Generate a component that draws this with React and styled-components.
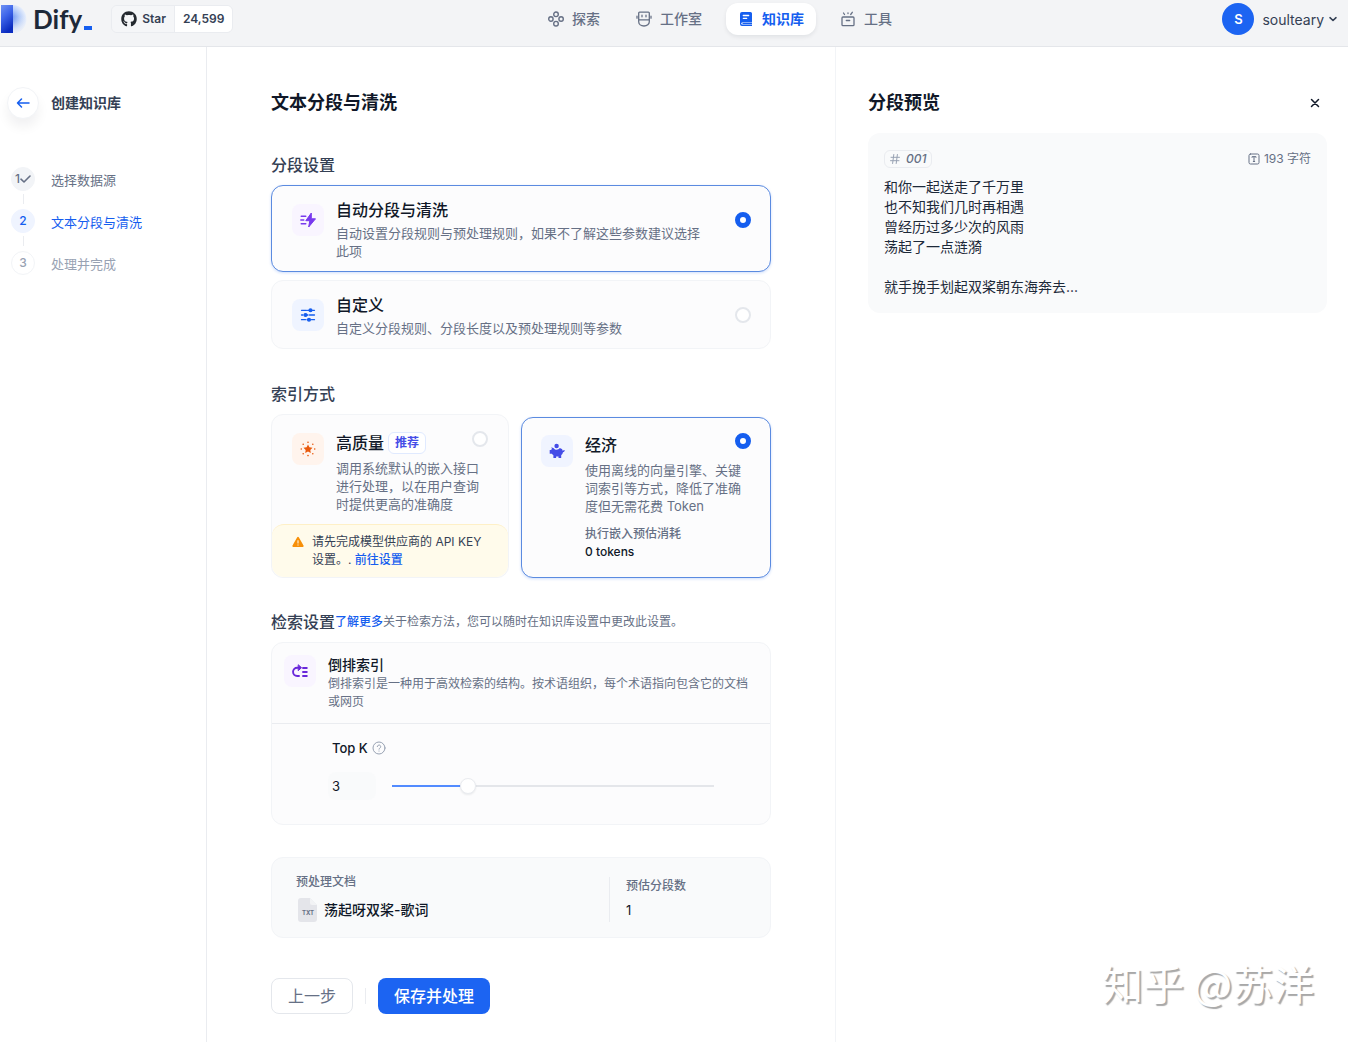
import React, { useState } from 'react';
import styled, { createGlobalStyle, css } from 'styled-components';
import { FaGithub } from 'react-icons/fa';

const colors = {
    blue: '#155eef',
    ink: '#101828',
    heading: '#344054',
    text: '#667085',
    muted: '#98a2b3',
    line: '#eaecf0',
    soft: '#f2f4f7',
    card: '#fcfcfd',
    panel: '#f9fafb',
};

const GlobalStyle = createGlobalStyle`
    *, *::before, *::after {
        box-sizing: border-box;
    }

    body {
        margin: 0;
        background-color: #fff;
        color: ${colors.ink};
        font-family: Inter, 'Noto Sans CJK SC', sans-serif;
        font-size: 14px;
        line-height: 20px;
    }

    h1, h2, h3, p {
        margin: 0;
    }

    button, input {
        font-family: inherit;
    }

    svg {
        display: block;
        flex-shrink: 0;
    }
`;

const Page = styled.div`
    min-height: 100vh;
    display: flex;
    flex-direction: column;
`;

/* Header */

const Header = styled.header`
    display: flex;
    justify-content: space-between;
    align-items: center;
    height: 47px;
    padding: 0 10px 8px 0;
    background-color: #f3f4f6;
    border-bottom: 1px solid #e4e6ea;
`;

const HeaderLeft = styled.div`
    display: flex;
    align-items: center;
    gap: 19px;
`;

const Logo = styled.a`
    display: flex;
    align-items: center;
    gap: 6px;
    color: #1d2939;
    font-family: Lato, sans-serif;
    font-size: 26px;
    font-weight: 700;
    line-height: 32px;
    text-decoration: none;
`;

const LogoText = styled.span`
    display: flex;
    align-items: flex-end;
    gap: 2px;
`;

const LogoCursor = styled.span`
    width: 8px;
    height: 4px;
    margin-bottom: 5px;
    background-color: ${colors.blue};
`;

const GithubBadge = styled.a`
    display: flex;
    height: 28px;
    border: 1px solid ${colors.line};
    border-radius: 6px;
    overflow: hidden;
    color: ${colors.heading};
    font-size: 12px;
    font-weight: 600;
    line-height: 26px;
    text-decoration: none;
`;

const BadgeLabel = styled.span`
    display: flex;
    align-items: center;
    gap: 5px;
    padding: 0 8px 0 9px;
    border-right: 1px solid ${colors.line};
    background-color: #f5f6f8;
`;

const BadgeCount = styled.span`
    padding: 0 8px;
    background-color: #fff;
`;

const Nav = styled.nav`
    display: flex;
    gap: 12px;
`;

const NavItem = styled.a`
    display: flex;
    align-items: center;
    gap: 8px;
    height: 32px;
    padding: 0 12px;
    border-radius: 12px;
    color: ${colors.text};
    font-weight: 500;
    text-decoration: none;

    ${props => props.$active && css`
        background-color: #fff;
        color: ${colors.blue};
        font-weight: 700;
        box-shadow: 0 2px 4px rgba(16, 24, 40, 0.08);
    `}
`;

const UserMenu = styled.button`
    display: flex;
    align-items: center;
    gap: 8px;
    padding: 0 0 0 16px;
    border: none;
    background: none;
    color: ${colors.heading};
    font-size: 14px;
`;

const Avatar = styled.span`
    width: 32px;
    height: 32px;
    border-radius: 50%;
    background-color: #1c64f2;
    color: #fff;
    font-size: 13px;
    font-weight: 600;
    line-height: 32px;
    text-align: center;
`;

const UserName = styled.span`
    display: flex;
    align-items: center;
    gap: 4px;
`;

/* Columns */

const Columns = styled.div`
    flex: 1;
    display: grid;
    grid-template-columns: 207px minmax(0, 628fr) minmax(0, 513fr);
`;

const Sidebar = styled.aside`
    padding: 40px 7px;
    border-right: 1px solid ${colors.line};
`;

const SidebarTop = styled.div`
    display: flex;
    align-items: center;
    gap: 12px;
    margin-bottom: 47px;
`;

const BackButton = styled.button`
    display: flex;
    justify-content: center;
    align-items: center;
    width: 32px;
    height: 32px;
    padding: 0;
    border: 1px solid ${colors.soft};
    border-radius: 50%;
    background-color: #fff;
    color: ${colors.blue};
    box-shadow: 0 8px 12px rgba(16, 24, 40, 0.06);
`;

const SidebarTitle = styled.h1`
    color: ${colors.heading};
    font-size: 14px;
    font-weight: 600;
`;

const Steps = styled.ol`
    margin: 0;
    padding: 0 0 0 4px;
    list-style: none;
`;

const Step = styled.li`
    display: grid;
    grid-template-columns: 24px 1fr;
    column-gap: 16px;
    color: ${props => props.$color};
    font-size: 13px;
    line-height: 28px;
`;

const StepNumber = styled.span`
    display: flex;
    justify-content: center;
    align-items: center;
    height: 24px;
    margin-top: 1px;
    border: 1px solid ${props => props.$border || props.$fill};
    border-radius: 50%;
    background-color: ${props => props.$fill};
    font-size: 12px;
    font-weight: 500;
`;

const StepLine = styled.span`
    width: 1px;
    height: 10px;
    margin: 0 auto 4px;
    background-color: ${colors.line};
`;

const Main = styled.main`
    padding: 44px 64px 27px;
`;

const PageTitle = styled.h2`
    font-size: 18px;
    font-weight: 600;
    line-height: 24px;
`;

const SectionTitle = styled.h3`
    color: ${colors.heading};
    font-size: 16px;
    font-weight: 500;
    line-height: 24px;
`;

const Section = styled.section`
    margin-top: ${props => props.$top}px;
`;

const SectionHead = styled.div`
    display: flex;
    align-items: center;
    margin-bottom: 8px;
    color: ${colors.text};
    font-size: 12px;
`;

const TextLink = styled.a`
    color: ${colors.blue};
    font-weight: 500;
    text-decoration: none;
`;

const Stack = styled.div`
    display: flex;
    flex-direction: column;
    gap: 8px;
`;

const IndexGrid = styled.div`
    display: grid;
    grid-template-columns: 238fr 250fr;
    align-items: end;
    gap: 12px;
`;

const cardFrame = css`
    border: 1px solid ${props => (props.$active ? '#5b8be0' : colors.soft)};
    border-radius: 12px;
    background-color: ${colors.card};
    box-shadow: ${props => (props.$active ? '0 1px 3px rgba(21, 94, 239, 0.2)' : 'none')};
`;

const OptionCard = styled.label`
    ${cardFrame}
    display: flex;
    align-items: flex-start;
    gap: 12px;
    padding: 12px 19px 11px 20px;
`;

const IndexCard = styled.div`
    ${cardFrame}
    overflow: hidden;
`;

const IndexBody = styled.label`
    display: flex;
    align-items: flex-start;
    gap: 12px;
    padding: ${props => props.$padding};
`;

const IconBox = styled.span`
    display: flex;
    justify-content: center;
    align-items: center;
    flex-shrink: 0;
    width: 32px;
    height: 32px;
    margin-top: ${props => props.$top || 0}px;
    border-radius: 8px;
    background-color: ${props => props.$fill};
`;

const OptionText = styled.span`
    flex: 1;
    min-width: 0;
    display: flex;
    flex-direction: column;
    gap: ${props => props.$gap || 2}px;
`;

const OptionTitle = styled.span`
    display: flex;
    align-items: center;
    gap: 4px;
    color: ${colors.ink};
    font-size: 16px;
    font-weight: 500;
    line-height: 24px;
`;

const OptionDescription = styled.span`
    color: ${colors.text};
    font-size: 13px;
    line-height: 18px;
`;

const Radio = styled.input.attrs({ type: 'radio' })`
    appearance: none;
    flex-shrink: 0;
    width: 16px;
    height: 16px;
    margin: 0;
    border: 2px solid #e4e7ec;
    border-radius: 50%;
    background-color: #fff;

    &:checked {
        border: 5px solid ${colors.blue};
    }
`;

const SideRadio = styled(Radio)`
    margin: 14px 0 0 12px;
`;

const TitleRadio = styled(Radio)`
    align-self: flex-start;
    margin-left: auto;
`;

const Recommend = styled.span`
    height: 22px;
    padding: 0 6px;
    border: 1px solid #e0eaff;
    border-radius: 6px;
    background-color: #fff;
    color: #444ce7;
    font-size: 12px;
    font-weight: 600;
    line-height: 20px;
`;

const Warning = styled.div`
    display: flex;
    align-items: flex-start;
    gap: 8px;
    padding: 8px 20px;
    border-top: 1px solid #fef0c7;
    border-radius: 12px;
    background-color: #fffbeb;
    color: ${colors.heading};
    font-size: 12px;
    line-height: 18px;

    svg {
        margin-top: 3px;
    }
`;

const Estimate = styled.span`
    display: flex;
    flex-direction: column;
    margin-top: 6px;
    color: ${colors.text};
    font-size: 12px;
    font-weight: 500;
    line-height: 18px;

    strong {
        color: ${colors.ink};
        font-weight: 500;
    }
`;

const RetrievalCard = styled.div`
    ${cardFrame}
`;

const RetrievalHead = styled.div`
    display: flex;
    gap: 12px;
    padding: 12px;
    border-bottom: 1px solid ${colors.line};
`;

const RetrievalTitle = styled.h3`
    font-size: 14px;
    font-weight: 500;
    line-height: 20px;
`;

const RetrievalText = styled.p`
    color: ${colors.text};
    font-size: 12px;
    line-height: 18px;
`;

const RetrievalBody = styled.div`
    padding: 14px 56px 24px;
`;

const TopKLabel = styled.label`
    display: flex;
    align-items: center;
    gap: 4px;
    padding-left: 4px;
    font-size: 13px;
    font-weight: 500;
    line-height: 20px;
`;

const TopKRow = styled.div`
    display: flex;
    align-items: center;
    gap: 16px;
    margin-top: 14px;
`;

const TopKInput = styled.input`
    appearance: textfield;
    width: 48px;
    height: 28px;
    padding: 0 4px;
    border: none;
    border-radius: 8px;
    background-color: ${colors.panel};
    color: ${colors.ink};
    font-size: 13px;

    &::-webkit-inner-spin-button {
        appearance: none;
    }
`;

const Slider = styled.input.attrs({ type: 'range' })`
    appearance: none;
    flex: 1;
    min-width: 0;
    height: 16px;
    margin: 0;
    background: linear-gradient(to right, #528bff var(--fill), #e4e6ea var(--fill)) center / 100% 2px no-repeat;

    &::-webkit-slider-thumb {
        appearance: none;
        width: 16px;
        height: 16px;
        border: 1px solid ${colors.line};
        border-radius: 50%;
        background-color: #fff;
        box-shadow: 0 1px 2px rgba(16, 24, 40, 0.08);
    }
`;

const Summary = styled.section`
    display: flex;
    margin-top: 32px;
    padding: 15px 24px;
    border: 1px solid ${colors.soft};
    border-radius: 12px;
    background-color: ${colors.panel};
`;

const SummaryDocument = styled.div`
    flex: 1;
`;

const SummarySegments = styled.div`
    display: flex;
    flex-direction: column;
    gap: 5px;
    width: 137px;
    margin-top: 4px;
    padding: 0 16px;
    border-left: 1px solid ${colors.line};
    font-size: 13px;
`;

const SummaryLabel = styled.p`
    color: ${colors.text};
    font-size: 12px;
    font-weight: 500;
    line-height: 18px;
`;

const FileName = styled.p`
    display: flex;
    align-items: center;
    gap: 4px;
    margin-top: 7px;
    font-weight: 500;
    line-height: 24px;
`;

const Actions = styled.div`
    display: flex;
    align-items: center;
    gap: 12px;
    margin-top: 40px;
`;

const Button = styled.button`
    height: 36px;
    padding: 0 16px;
    border: 1px solid #e4e7ec;
    border-radius: 8px;
    background-color: #fff;
    color: ${colors.text};
    font-size: 16px;
    line-height: 24px;

    ${props => props.$primary && css`
        border: none;
        background-color: #1c64f2;
        color: #fff;
        font-weight: 500;
    `}
`;

const ActionsDivider = styled.span`
    width: 1px;
    height: 16px;
    background-color: ${colors.line};
`;

/* Preview */

const Preview = styled.aside`
    padding: 44px 21px 32px 32px;
    border-left: 1px solid ${colors.soft};
`;

const PreviewHead = styled.div`
    display: flex;
    justify-content: space-between;
    align-items: center;
    margin-bottom: 18px;
`;

const CloseButton = styled.button`
    display: flex;
    padding: 4px;
    border: none;
    background: none;
    color: ${colors.ink};
`;

const SegmentCard = styled.article`
    padding: 16px;
    border-radius: 12px;
    background-color: ${colors.panel};
`;

const SegmentHead = styled.div`
    display: flex;
    justify-content: space-between;
    align-items: center;
    margin-bottom: 8px;
    color: ${colors.text};
    font-size: 12px;
`;

const SegmentId = styled.span`
    display: flex;
    align-items: center;
    gap: 6px;
    height: 18px;
    padding: 0 5px;
    border: 1px solid ${colors.line};
    border-radius: 6px;
    font-style: italic;
    font-weight: 500;
`;

const SegmentCount = styled.span`
    display: flex;
    align-items: center;
    gap: 4px;
`;

const SegmentText = styled.p`
    color: #1d2939;
    white-space: pre-line;
`;

const Watermark = styled.div`
    position: absolute;
    right: 34px;
    bottom: 32px;
    color: #fff;
    font-family: 'Noto Sans CJK SC', sans-serif;
    font-size: 41px;
    line-height: 56px;
    text-shadow: 2px 2px 1px #a8a8a8;
    pointer-events: none;
`;

/* Icons */

const LogoMark = () => (
    <svg width="27" height="28" viewBox="0 0 27 28">
        <defs>
            <linearGradient id="stem" x1="0" y1="0" x2="0.4" y2="1">
                <stop offset="0" stopColor="#6f92f3" />
                <stop offset="0.45" stopColor="#3f66ea" />
                <stop offset="1" stopColor="#0b2cc0" />
            </linearGradient>
            <radialGradient id="bowl" gradientUnits="userSpaceOnUse" cx="9" cy="15" r="18">
                <stop offset="0.2" stopColor="#6f97f3" />
                <stop offset="0.6" stopColor="#b3cbf9" />
                <stop offset="1" stopColor="#edf2fc" />
            </radialGradient>
            <linearGradient id="fade" x1="0" y1="0" x2="0" y2="1">
                <stop offset="0.4" stopColor="#f3f4f6" stopOpacity="0" />
                <stop offset="1" stopColor="#f3f4f6" stopOpacity="0.8" />
            </linearGradient>
        </defs>
        <path d="M12 0h1a13.500 14 0 0 1 0 28h-1z" fill="url(#bowl)" />
        <path d="M12 0h1a13.500 14 0 0 1 0 28h-1z" fill="url(#fade)" />
        <path d="M1 0h12v28H1z" fill="url(#stem)" />
    </svg>
);

const ExploreIcon = () => (
    <svg width="16" height="16" viewBox="0 0 16 16" fill="none" stroke="currentColor" strokeWidth="1.4">
        <circle cx="8" cy="3.3" r="2.3" />
        <circle cx="8" cy="12.7" r="2.3" />
        <circle cx="2.9" cy="8" r="2.2" />
        <circle cx="13.1" cy="8" r="2.2" />
    </svg>
);

const StudioIcon = () => (
    <svg width="16" height="16" viewBox="0 0 16 16" fill="none" stroke="currentColor" strokeWidth="1.3" strokeLinecap="round" strokeLinejoin="round">
        <path d="M3.600 1.200h8.800a.9.9 0 0 1 .9.9v6.700H2.700V2.100a.9.900 0 0 1 .9-.9z" />
        <path d="M2.700 8.800v2c0 2.300 2.200 4.200 5.300 4.200s5.300-1.900 5.300-4.200v-2M1 5.200v2M15 5.200v2M6 4.200v1.600M10 4.200v1.600" />
    </svg>
);

const BookIcon = () => (
    <svg width="16" height="16" viewBox="0 0 16 16">
        <path d="M4 1h8.500A1.500 1.500 0 0 1 14 2.500v9H4.200a1 1 0 0 0 0 2H14V15H4a2 2 0 0 1-2-2V3a2 2 0 0 1 2-2z" fill="currentColor" />
        <path d="M5.300 4.500h5.400M5.300 7.300h3.400" stroke="#fff" strokeWidth="1.300" strokeLinecap="round" />
        <path d="M4.500 12.500H14" stroke="currentColor" strokeWidth="1" />
    </svg>
);

const ToolsIcon = () => (
    <svg width="16" height="16" viewBox="0 0 16 16" fill="none" stroke="currentColor" strokeWidth="1.3" strokeLinecap="round" strokeLinejoin="round">
        <rect x="2" y="6" width="12" height="8.700" rx="1" />
        <path d="M6.300 9.500h3.400M3.500 2l1 1.500M8 1.800v.8M12.300 1.300l-1.600 2.200" />
    </svg>
);

const ChevronIcon = () => (
    <svg width="10" height="10" viewBox="0 0 10 10" fill="none" stroke="currentColor" strokeWidth="1.6" strokeLinecap="round" strokeLinejoin="round">
        <path d="M2 3.700l3 2.800 3-2.800" />
    </svg>
);

const ArrowLeftIcon = () => (
    <svg width="14" height="12" viewBox="0 0 14 12" fill="none" stroke="currentColor" strokeWidth="1.5" strokeLinecap="round" strokeLinejoin="round">
        <path d="M13 6H1.500M5.500 2l-4 4 4 4" />
    </svg>
);

const CheckIcon = () => (
    <svg width="11" height="10" viewBox="0 0 11 10" fill="none" stroke="currentColor" strokeWidth="1.6" strokeLinecap="round" strokeLinejoin="round">
        <path d="M1 5.200l3 2.800L10 2" />
    </svg>
);

const CloseIcon = () => (
    <svg width="16" height="16" viewBox="0 0 16 16" stroke="currentColor" strokeWidth="1.5" strokeLinecap="round">
        <path d="M4.500 4.500l7 7M11.500 4.500l-7 7" />
    </svg>
);

const BoltIcon = () => (
    <svg width="16" height="16" viewBox="0 0 16 16">
        <path d="M11.300 1L5.800 8.700h4L8.700 15l6.800-8.200h-4.200z" fill="#7839ee" stroke="#7839ee" strokeLinejoin="round" />
        <path d="M1.200 4.200h4.600M.8 8h3M1.200 11.800h4.600" stroke="#7839ee" strokeWidth="1.400" strokeLinecap="round" />
    </svg>
);

const SlidersIcon = () => (
    <svg width="16" height="16" viewBox="0 0 16 16" stroke="#155eef" fill="#155eef" strokeWidth="1.300" strokeLinecap="round">
        <path d="M1.500 3.300h5M12.500 3.300h2M1.500 8h1.500M9.500 8h5M1.500 12.700h4M11.500 12.700h3" />
        <path d="M7.500 3.300h2M6 8h2M7 12.700h1" />
        <circle cx="10.500" cy="3.300" r="1.400" />
        <circle cx="5.500" cy="8" r="1.400" />
        <circle cx="9" cy="12.700" r="1.400" />
    </svg>
);

const StarIcon = () => (
    <svg width="16" height="16" viewBox="0 0 16 16" fill="#e9590c">
        <path d="M8 3.400l1.400 2.800 3.100.5-2.200 2.200.5 3.100L8 10.600 5.200 12l.5-3.100-2.200-2.200 3.100-.5z" />
        <circle cx="8" cy="1.300" r=".8" />
        <circle cx="3.200" cy="3.300" r=".8" />
        <circle cx="12.800" cy="3.300" r=".8" />
        <circle cx="1.300" cy="8" r=".8" />
        <circle cx="14.700" cy="8" r=".8" />
        <circle cx="3.200" cy="12.800" r=".8" />
        <circle cx="12.800" cy="12.800" r=".8" />
        <circle cx="8" cy="14.600" r=".8" />
    </svg>
);

const PiggyIcon = () => (
    <svg width="16" height="16" viewBox="0 0 16 16" fill="#444ce7">
        <circle cx="7.600" cy="3" r="2.200" />
        <path d="M2.300 4.300l2.500.9c.7 1 1.700 1.500 2.800 1.500 1.300 0 2.500-.7 3.100-1.700 1.800.4 2.800 1.400 3.100 2.900.5 0 .7-.3.700-.9h1.100c.1 1.300-.4 2.100-1.600 2.300-.2 1.200-.9 2.200-1.800 2.900v2.900H9.500v-1.500H7.100v1.500H4.400v-2.900c-.7-.4-1.200-.9-1.500-1.500H.7V6.900h1.500c.2-.5.400-.9.700-1.200z" />
    </svg>
);

const WarningIcon = () => (
    <svg width="12" height="12" viewBox="0 0 12 12">
        <path d="M5.200 1.200a.9.900 0 0 1 1.600 0l4.700 8.400a.9.900 0 0 1-.8 1.400H1.300a.9.900 0 0 1-.8-1.400z" fill="#f79009" />
        <path d="M6 4.700v2.400M6 8.900v.2" stroke="#fff" strokeWidth="1" strokeLinecap="round" />
    </svg>
);

const InvertedIcon = () => (
    <svg width="16" height="16" viewBox="0 0 16 16" fill="none" stroke="#6927da" strokeWidth="1.900" strokeLinecap="round">
        <path d="M7 4.700H5.200a4 4 0 0 0 0 8.300H7M11 5h3.800M11 9h3.800M11 13h3.800" />
        <path d="M6.500 2l3 2.700-3 2.700z" fill="#6927da" strokeWidth="1" strokeLinejoin="round" />
    </svg>
);

const HelpIcon = () => (
    <svg width="14" height="14" viewBox="0 0 14 14" fill="none" stroke="#98a2b3" strokeLinecap="round">
        <circle cx="7" cy="7" r="6" />
        <path d="M5.300 5.600a1.700 1.700 0 1 1 2.600 1.500c-.6.300-.9.600-.9 1.100M7 10v.1" />
    </svg>
);

const FileIcon = () => (
    <svg width="24" height="24" viewBox="0 0 24 24">
        <path d="M5 0h9l7 7v14a3 3 0 0 1-3 3H5a3 3 0 0 1-3-3V3a3 3 0 0 1 3-3z" fill="#e4e5ea" />
        <path d="M14 0l7 7h-5a2 2 0 0 1-2-2z" fill="#f2f3f5" />
        <text x="12" y="17" textAnchor="middle" fontSize="6" fontWeight="700" fill="#667085">TXT</text>
    </svg>
);

const HashIcon = () => (
    <svg width="10" height="10" viewBox="0 0 10 10" stroke="#98a2b3" strokeLinecap="round">
        <path d="M1 3.300h8.500M.5 6.700H9M3.800.5L2.600 9.500M7.400.5L6.200 9.500" />
    </svg>
);

const TypeSquareIcon = () => (
    <svg width="12" height="12" viewBox="0 0 12 12" fill="none" stroke="currentColor" strokeLinecap="round">
        <rect x="1" y="1" width="10" height="10" rx="1.500" />
        <path d="M4 4.300v-.6h4v.6M6 3.700v4.800M5.300 8.500h1.400" />
    </svg>
);

const navItems = [
    { label: '探索', Icon: ExploreIcon },
    { label: '工作室', Icon: StudioIcon },
    { label: '知识库', Icon: BookIcon, active: true },
    { label: '工具', Icon: ToolsIcon },
];

const segment = `和你一起送走了千万里
也不知我们几时再相遇
曾经历过多少次的风雨
荡起了一点涟漪

就手挽手划起双桨朝东海奔去...`;

const App = () => {
    const [mode, setMode] = useState('auto');
    const [index, setIndex] = useState('economy');
    const [topK, setTopK] = useState(3);

    const handleTopKChange = e => setTopK(Number(e.target.value));

    return (
        <Page>
            <GlobalStyle />
            <Header>
                <HeaderLeft>
                    <Logo href="#">
                        <LogoMark />
                        <LogoText>Dify<LogoCursor /></LogoText>
                    </Logo>
                    <GithubBadge href="#">
                        <BadgeLabel><FaGithub size={16} color="#24292f" />Star</BadgeLabel>
                        <BadgeCount>24,599</BadgeCount>
                    </GithubBadge>
                </HeaderLeft>
                <Nav>
                    {navItems.map(({ label, Icon, active }) => (
                        <NavItem key={label} href="#" $active={active}>
                            <Icon />
                            {label}
                        </NavItem>
                    ))}
                </Nav>
                <UserMenu type="button">
                    <Avatar>S</Avatar>
                    <UserName>soulteary<ChevronIcon /></UserName>
                </UserMenu>
            </Header>
            <Columns>
                <Sidebar>
                    <SidebarTop>
                        <BackButton type="button" aria-label="返回"><ArrowLeftIcon /></BackButton>
                        <SidebarTitle>创建知识库</SidebarTitle>
                    </SidebarTop>
                    <Steps>
                        <Step $color={colors.text}>
                            <StepNumber $fill="#f2f4f7">1<CheckIcon /></StepNumber>
                            选择数据源
                            <StepLine />
                        </Step>
                        <Step $color={colors.blue}>
                            <StepNumber $fill="#eff4ff">2</StepNumber>
                            文本分段与清洗
                            <StepLine />
                        </Step>
                        <Step $color={colors.muted}>
                            <StepNumber $fill="#fff" $border={colors.soft}>3</StepNumber>
                            处理并完成
                        </Step>
                    </Steps>
                </Sidebar>
                <Main>
                    <PageTitle>文本分段与清洗</PageTitle>

                    <Section $top={38}>
                        <SectionHead><SectionTitle>分段设置</SectionTitle></SectionHead>
                        <Stack>
                            <OptionCard $active={mode === 'auto'}>
                                <IconBox $fill="#f9f5ff" $top={6}><BoltIcon /></IconBox>
                                <OptionText>
                                    <OptionTitle>自动分段与清洗</OptionTitle>
                                    <OptionDescription>自动设置分段规则与预处理规则，如果不了解这些参数建议选择此项</OptionDescription>
                                </OptionText>
                                <SideRadio name="mode" checked={mode === 'auto'} onChange={() => setMode('auto')} />
                            </OptionCard>
                            <OptionCard $active={mode === 'custom'}>
                                <IconBox $fill="#eff4ff" $top={6}><SlidersIcon /></IconBox>
                                <OptionText>
                                    <OptionTitle>自定义</OptionTitle>
                                    <OptionDescription>自定义分段规则、分段长度以及预处理规则等参数</OptionDescription>
                                </OptionText>
                                <SideRadio name="mode" checked={mode === 'custom'} onChange={() => setMode('custom')} />
                            </OptionCard>
                        </Stack>
                    </Section>

                    <Section $top={33}>
                        <SectionHead><SectionTitle>索引方式</SectionTitle></SectionHead>
                        <IndexGrid>
                            <IndexCard $active={index === 'quality'}>
                                <IndexBody $padding="16px 20px 11px">
                                    <IconBox $fill="#fff4ed" $top={2}><StarIcon /></IconBox>
                                    <OptionText $gap={4}>
                                        <OptionTitle>
                                            高质量<Recommend>推荐</Recommend>
                                            <TitleRadio name="index" checked={index === 'quality'} onChange={() => setIndex('quality')} />
                                        </OptionTitle>
                                        <OptionDescription>调用系统默认的嵌入接口进行处理，以在用户查询时提供更高的准确度</OptionDescription>
                                    </OptionText>
                                </IndexBody>
                                <Warning>
                                    <WarningIcon />
                                    <span>请先完成模型供应商的 API KEY 设置。. <TextLink href="#">前往设置</TextLink></span>
                                </Warning>
                            </IndexCard>
                            <IndexCard $active={index === 'economy'}>
                                <IndexBody $padding="15px 19px 16px">
                                    <IconBox $fill="#f0f4ff" $top={2}><PiggyIcon /></IconBox>
                                    <OptionText $gap={4}>
                                        <OptionTitle>
                                            经济
                                            <TitleRadio name="index" checked={index === 'economy'} onChange={() => setIndex('economy')} />
                                        </OptionTitle>
                                        <OptionDescription>使用离线的向量引擎、关键词索引等方式，降低了准确度但无需花费 Token</OptionDescription>
                                        <Estimate>执行嵌入预估消耗<strong>0 tokens</strong></Estimate>
                                    </OptionText>
                                </IndexBody>
                            </IndexCard>
                        </IndexGrid>
                    </Section>

                    <Section $top={32}>
                        <SectionHead>
                            <SectionTitle>检索设置</SectionTitle>
                            <TextLink href="#">了解更多</TextLink>
                            关于检索方法，您可以随时在知识库设置中更改此设置。
                        </SectionHead>
                        <RetrievalCard>
                            <RetrievalHead>
                                <IconBox $fill="#f9f5ff"><InvertedIcon /></IconBox>
                                <div>
                                    <RetrievalTitle>倒排索引</RetrievalTitle>
                                    <RetrievalText>倒排索引是一种用于高效检索的结构。按术语组织，每个术语指向包含它的文档或网页</RetrievalText>
                                </div>
                            </RetrievalHead>
                            <RetrievalBody>
                                <TopKLabel htmlFor="top-k">Top K<HelpIcon /></TopKLabel>
                                <TopKRow>
                                    <TopKInput id="top-k" type="number" min="1" max="10" value={topK} onChange={handleTopKChange} />
                                    <Slider
                                        aria-label="Top K"
                                        min="1"
                                        max="10"
                                        value={topK}
                                        onChange={handleTopKChange}
                                        style={{ '--fill': `${((topK - 1) / 9) * 100}%` }}
                                    />
                                </TopKRow>
                            </RetrievalBody>
                        </RetrievalCard>
                    </Section>

                    <Summary>
                        <SummaryDocument>
                            <SummaryLabel>预处理文档</SummaryLabel>
                            <FileName><FileIcon />荡起呀双桨-歌词</FileName>
                        </SummaryDocument>
                        <SummarySegments>
                            <SummaryLabel>预估分段数</SummaryLabel>
                            <span>1</span>
                        </SummarySegments>
                    </Summary>

                    <Actions>
                        <Button type="button">上一步</Button>
                        <ActionsDivider />
                        <Button type="button" $primary>保存并处理</Button>
                    </Actions>
                </Main>
                <Preview>
                    <PreviewHead>
                        <PageTitle>分段预览</PageTitle>
                        <CloseButton type="button" aria-label="关闭"><CloseIcon /></CloseButton>
                    </PreviewHead>
                    <SegmentCard>
                        <SegmentHead>
                            <SegmentId><HashIcon />001</SegmentId>
                            <SegmentCount><TypeSquareIcon />193 字符</SegmentCount>
                        </SegmentHead>
                        <SegmentText>{segment}</SegmentText>
                    </SegmentCard>
                </Preview>
            </Columns>
            <Watermark>知乎 @苏洋</Watermark>
        </Page>
    );
};

export default App;
